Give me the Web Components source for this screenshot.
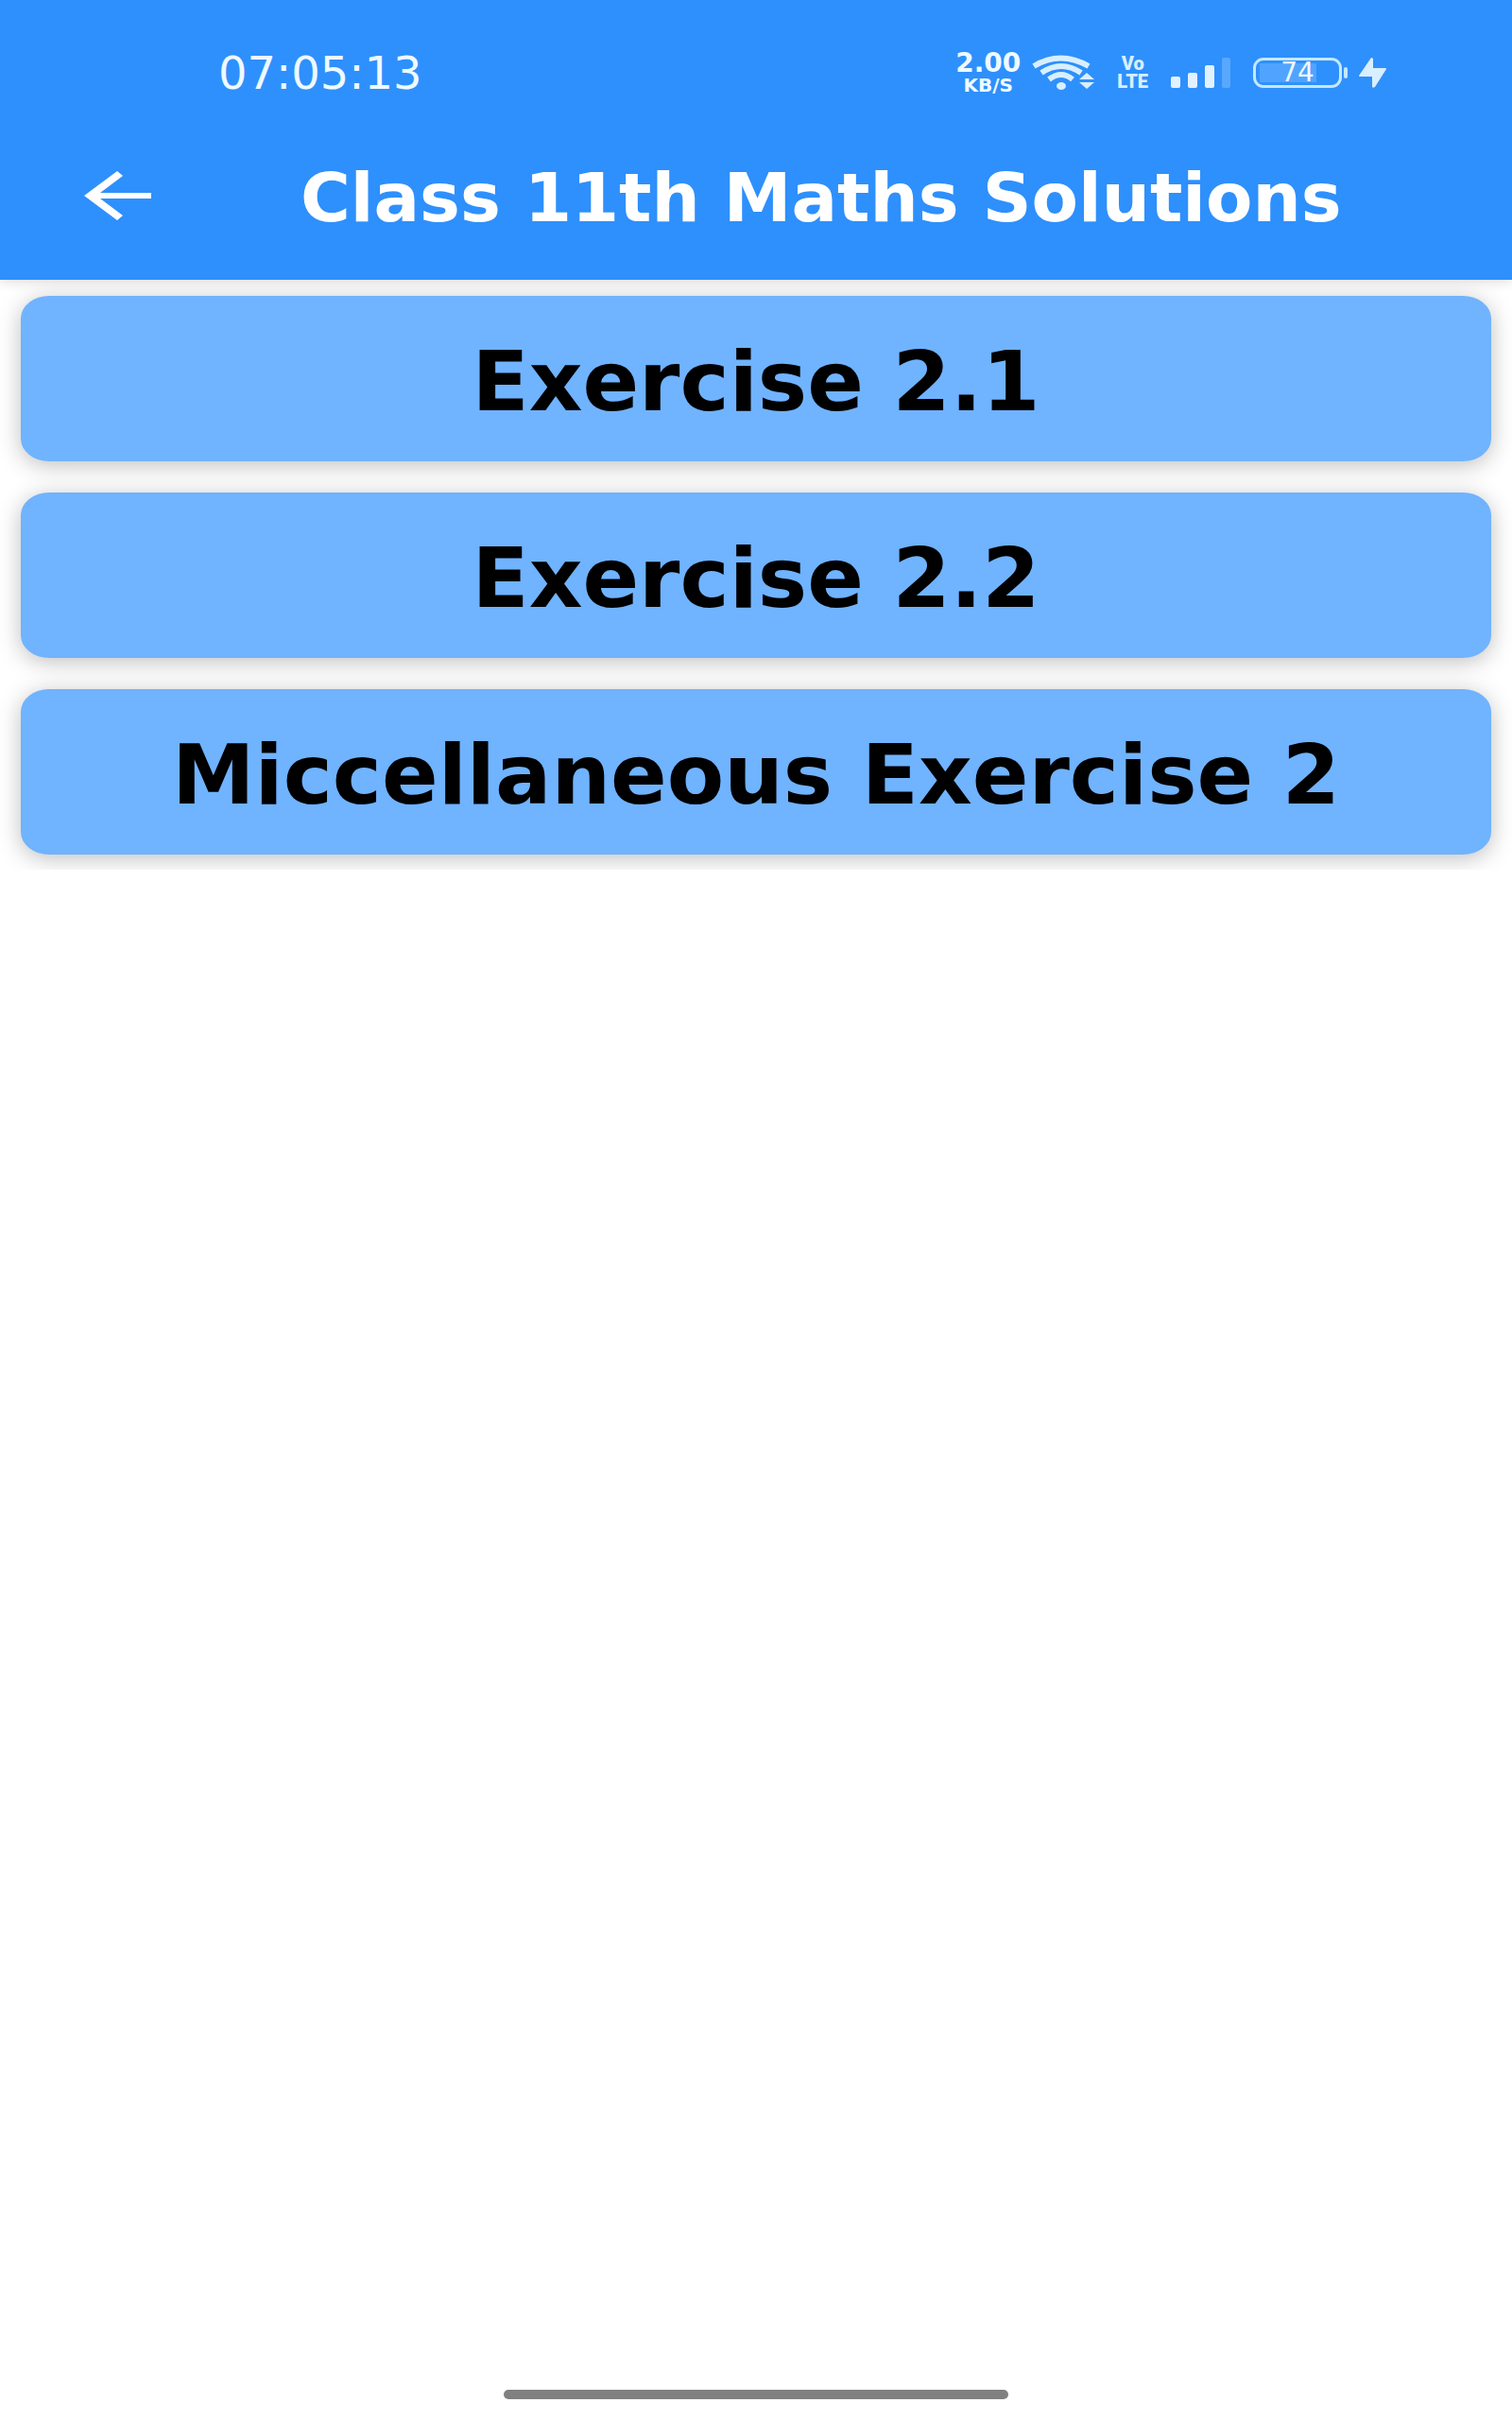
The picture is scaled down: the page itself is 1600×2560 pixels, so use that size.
<!DOCTYPE html>
<html lang="en">
<head>
<meta charset="utf-8">
<meta name="viewport" content="width=device-width, initial-scale=1">
<title>Class 11th Maths Solutions</title>
<style>
    body { margin: 0; background: #fff; font-family: "DejaVu Sans", Roboto, sans-serif; }
</style>
</head>
<body>
<app-screen>
    <status-bar slot="header" time="07:05:13" speed="2.00" unit="KB/S" battery="74"></status-bar>
    <app-toolbar slot="header">Class 11th Maths Solutions</app-toolbar>
    <exercise-item>Exercise 2.1</exercise-item>
    <exercise-item>Exercise 2.2</exercise-item>
    <exercise-item>Miccellaneous Exercise 2</exercise-item>
</app-screen>

<script>
class AppScreen extends HTMLElement {
    constructor() {
        super();
        this.attachShadow({ mode: 'open' }).innerHTML = `
            <style>
                :host {
                    display: flex;
                    flex-direction: column;
                    min-height: 100vh;
                }
                header {
                    background: #2e90fc;
                    color: #fff;
                    padding-bottom: 36px;
                    box-shadow: 0 2px 12px rgba(0,0,0,0.14);
                }
                main {
                    display: flex;
                    flex-direction: column;
                    gap: 33px;
                    padding: 17px 22px 16px;
                    overflow: hidden;
                }
                footer {
                    margin-top: auto;
                    padding-bottom: 22px;
                }
                .home {
                    width: 33.4%;
                    height: 10px;
                    margin: 0 auto;
                    border-radius: 5px;
                    background: #808080;
                }
            </style>
            <header><slot name="header"></slot></header>
            <main><slot></slot></main>
            <footer><div class="home"></div></footer>
        `;
    }
}

class StatusBar extends HTMLElement {
    constructor() {
        super();
        this.attachShadow({ mode: 'open' });
    }

    connectedCallback() {
        const get = (name) => this.getAttribute(name) || '';

        this.shadowRoot.innerHTML = `
            <style>
                :host {
                    display: flex;
                    align-items: center;
                    justify-content: space-between;
                    height: 154px;
                    padding: 0 133px 0 231px;
                    color: #eefaff;
                }
                svg { display: block; }
                .time { font-size: 48px; }
                .icons { display: flex; align-items: center; gap: 24px; }
                .group { display: flex; align-items: center; gap: 12px; }
                .speed, .volte { text-align: center; font-weight: 700; }
                .speed { font-size: 28px; line-height: 26px; }
                .speed span { display: block; }
                .speed .unit { font-size: 20px; line-height: 20px; }
                .volte { font-family: Roboto, sans-serif; font-weight: 900; font-size: 20px; line-height: 19px; color: #d8efff; }
                .volte span { display: block; }
                .battery {
                    box-sizing: border-box;
                    display: grid;
                    place-items: center;
                    width: 94px;
                    height: 32px;
                    border: 3px solid #c4e8ff;
                    border-radius: 11px;
                    font-size: 28px;
                    line-height: 26px;
                    background: linear-gradient(#50a4ff, #50a4ff) 4px 3px / 60px 20px no-repeat;
                }
                .nub { width: 4px; height: 12px; border-radius: 2px; background: #c4e8ff; }
                .cell { display: flex; align-items: center; gap: 2px; }
            </style>
            <span class="time">${get('time')}</span>
            <div class="icons">
                <div class="group">
                    <div class="speed"><span>${get('speed')}</span><span class="unit">${get('unit')}</span></div>
                    <svg width="66" height="38" viewBox="0 0 66 38">
                        <g fill="none" stroke="#d8efff" stroke-width="6">
                            <path d="M2 12Q30-5 60 12"/>
                            <path d="M10 19Q31 5 52 19"/>
                            <path d="M18 26Q31 16 43 26"/>
                        </g>
                        <ellipse cx="31" cy="33" rx="5" ry="4" fill="#d8efff"/>
                        <path d="M50 26l8-7 8 7zM50 29h16l-8 7z" fill="#d8efff"/>
                    </svg>
                </div>
                <div class="volte"><span>Vo</span><span>LTE</span></div>
                <svg width="63" height="32" viewBox="0 0 63 32">
                    <g fill="#e2f1ff">
                        <rect y="20" width="10" height="12" rx="2"/>
                        <rect x="18" y="16" width="10" height="16" rx="2"/>
                        <rect x="36" y="8" width="10" height="24" rx="2"/>
                    </g>
                    <rect x="54" width="9" height="32" rx="2" fill="#58a8ff"/>
                </svg>
                <div class="group">
                    <div class="cell"><div class="battery">${get('battery')}</div><div class="nub"></div></div>
                    <svg width="29" height="32" viewBox="0 0 29 32">
                        <path d="M13 0L0 19Q0 20 1 20H14V31Q15 32 17 31L29 12Q29 11 28 11H15V1Q14 0 13 0Z" fill="#d8efff"/>
                    </svg>
                </div>
            </div>
        `;
    }
}

class AppToolbar extends HTMLElement {
    constructor() {
        super();
        this.attachShadow({ mode: 'open' }).innerHTML = `
            <style>
                :host {
                    display: flex;
                    align-items: center;
                    height: 106px;
                    padding-left: 88px;
                    gap: 158px;
                }
                button { padding: 0; border: 0; background: none; color: inherit; cursor: pointer; }
                svg { display: block; }
                h1 { margin: 0; padding-top: 4px; font-size: 72px; line-height: 82px; font-weight: 700; white-space: nowrap; }
            </style>
            <button aria-label="Back">
                <svg width="72" height="52" viewBox="0 0 72 52">
                    <path d="M36 0L42 5L18 23H72V29H18L42 47L36 52L1 26Z" fill="currentColor"/>
                </svg>
            </button>
            <h1><slot></slot></h1>
        `;
    }
}

class ExerciseItem extends HTMLElement {
    constructor() {
        super();
        this.attachShadow({ mode: 'open' }).innerHTML = `
            <style>
                :host { display: block; }
                button {
                    display: block;
                    width: 100%;
                    height: 175px;
                    padding: 6px 0 0;
                    border: 0;
                    border-radius: 30px / 24px;
                    background: #70b3ff;
                    color: #000;
                    font: 700 88px/100px "DejaVu Sans", Roboto, sans-serif;
                    box-shadow: 0 4px 24px rgba(0,0,0,0.26);
                    cursor: pointer;
                }
            </style>
            <button><slot></slot></button>
        `;
    }
}

customElements.define('app-screen', AppScreen);
customElements.define('status-bar', StatusBar);
customElements.define('app-toolbar', AppToolbar);
customElements.define('exercise-item', ExerciseItem);
</script>
</body>
</html>
